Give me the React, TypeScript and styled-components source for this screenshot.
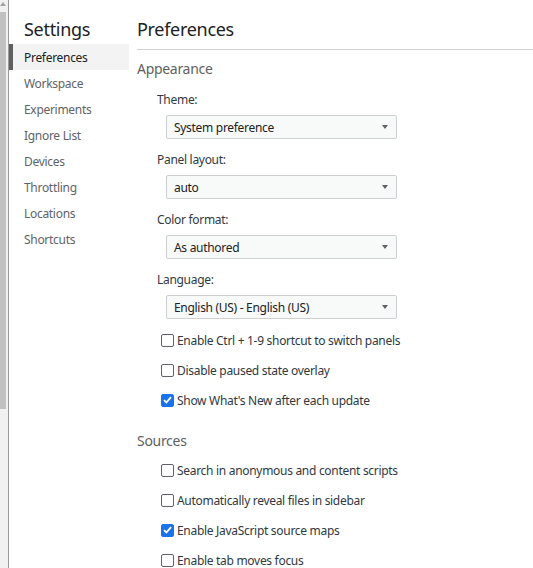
import styled, { createGlobalStyle } from 'styled-components';

const GlobalStyle = createGlobalStyle`
  html, body {
    margin: 0;
    padding: 0;
    background: #ffffff;
  }
  body {
    font-family: "Segoe UI", "Noto Sans", "Open Sans", sans-serif;
    font-size: 12px;
    letter-spacing: -0.025em;
    color: #303942;
    overflow: hidden;
  }
`;

const StyledFrame = styled.div`
  display: flex;
  height: 568px;
  width: 533px;
  overflow: hidden;
`;

const StyledRail = styled.div`
  background-color: #f1f1f1;
  display: flex;
  flex-direction: column;
  flex: 0 0 8px;
`;

const StyledRailArrow = styled.div`
  border-bottom: 4px solid #a3a3a3;
  border-left: 3px solid transparent;
  border-right: 3px solid transparent;
  height: 0;
  margin: 2px 0 0 0;
  width: 0;
`;

const StyledRailThumb = styled.div`
  background-color: #c1c1c1;
  height: 397px;
  margin-top: 6px;
  width: 6px;
`;

const StyledSidebar = styled.nav`
  border-left: 1px solid #9a9a9a;
  display: flex;
  flex: 0 0 120px;
  flex-direction: column;
`;

const StyledSidebarTitle = styled.h1`
  color: #202124;
  font-size: 18px;
  font-weight: 400;
  line-height: 24px;
  margin: 17px 0 3px 15px;
`;

const StyledNavItem = styled.div<{ $selected?: boolean }>`
  background-color: ${(p) => (p.$selected ? '#f3f3f3' : 'transparent')};
  border-left: 4px solid ${(p) => (p.$selected ? '#606060' : 'transparent')};
  color: ${(p) => (p.$selected ? '#202124' : '#5f6368')};
  height: 26px;
  line-height: 27px;
  padding-left: 11px;
`;

const StyledMain = styled.main`
  display: flex;
  flex: 1;
  flex-direction: column;
  min-width: 0;
  padding-left: 8px;
`;

const StyledHeader = styled.h2`
  border-bottom: 1px solid #d1d3d6;
  color: #202124;
  font-size: 18px;
  font-weight: 400;
  line-height: 24px;
  margin: 0;
  padding: 17px 0 8px;
`;

const StyledSection = styled.section<{ $spaced?: boolean }>`
  display: flex;
  flex-direction: column;
  margin-top: ${(p) => (p.$spaced ? '7px' : '0')};
`;

const StyledSectionTitle = styled.h3<{ $compact?: boolean }>`
  color: #5f5f5f;
  font-size: 14px;
  font-weight: 400;
  line-height: 20px;
  margin: 9px 0 ${(p) => (p.$compact ? '4px' : '6px')};
`;

const StyledField = styled.div`
  display: flex;
  flex-direction: column;
  padding-left: 20px;
`;

const StyledLabel = styled.label`
  color: #303942;
  line-height: 16px;
  margin: 7px 0;
`;

const StyledSelect = styled.div`
  align-items: center;
  background-color: #f8f9f9;
  border: 1px solid #cdcfd2;
  border-radius: 2px;
  box-sizing: border-box;
  color: #202124;
  display: flex;
  height: 24px;
  justify-content: space-between;
  margin: 0 0 6px 9px;
  padding: 0 8px 0 7px;
  width: 231px;
`;

const StyledCaret = styled.span`
  border-left: 3.5px solid transparent;
  border-right: 3.5px solid transparent;
  border-top: 4px solid #5f6368;
  height: 0;
  width: 0;
`;

const StyledCheckRow = styled.label`
  align-items: center;
  color: #303942;
  display: flex;
  gap: 3px;
  height: 30px;
  padding-left: 24px;
  white-space: nowrap;
`;

const StyledBox = styled.span<{ $checked?: boolean }>`
  align-items: center;
  background-color: ${(p) => (p.$checked ? '#1a73e8' : '#ffffff')};
  border: 1px solid ${(p) => (p.$checked ? '#1a73e8' : '#5f6368')};
  border-radius: 2px;
  box-sizing: border-box;
  display: flex;
  flex: 0 0 13px;
  height: 13px;
  justify-content: center;
`;

const NAV = [
  'Preferences',
  'Workspace',
  'Experiments',
  'Ignore List',
  'Devices',
  'Throttling',
  'Locations',
  'Shortcuts',
];

const SELECTS = [
  { label: 'Theme:', value: 'System preference' },
  { label: 'Panel layout:', value: 'auto' },
  { label: 'Color format:', value: 'As authored' },
  { label: 'Language:', value: 'English (US) - English (US)' },
];

const Check = ({ text, checked }: { text: string; checked?: boolean }) => (
  <StyledCheckRow>
    <StyledBox $checked={checked}>
      {checked && (
        <svg width="9" height="8" viewBox="0 0 9 8">
          <path d="M1 4.2 L3.4 6.5 L8 1.2" fill="none" stroke="#fff" strokeWidth="1.8" />
        </svg>
      )}
    </StyledBox>
    {text}
  </StyledCheckRow>
);

const App = () => {
  return (
    <>
      <GlobalStyle />
      <StyledFrame>
        <StyledRail>
          <StyledRailArrow />
          <StyledRailThumb />
        </StyledRail>
        <StyledSidebar>
          <StyledSidebarTitle>Settings</StyledSidebarTitle>
          {NAV.map((item, i) => (
            <StyledNavItem key={item} $selected={i === 0}>
              {item}
            </StyledNavItem>
          ))}
        </StyledSidebar>
        <StyledMain>
          <StyledHeader>Preferences</StyledHeader>
          <StyledSection>
            <StyledSectionTitle>Appearance</StyledSectionTitle>
            {SELECTS.map((s) => (
              <StyledField key={s.label}>
                <StyledLabel>{s.label}</StyledLabel>
                <StyledSelect>
                  {s.value}
                  <StyledCaret />
                </StyledSelect>
              </StyledField>
            ))}
            <Check text="Enable Ctrl + 1-9 shortcut to switch panels" />
            <Check text="Disable paused state overlay" />
            <Check text="Show What's New after each update" checked />
          </StyledSection>
          <StyledSection $spaced>
            <StyledSectionTitle $compact>Sources</StyledSectionTitle>
            <Check text="Search in anonymous and content scripts" />
            <Check text="Automatically reveal files in sidebar" />
            <Check text="Enable JavaScript source maps" checked />
            <Check text="Enable tab moves focus" />
          </StyledSection>
        </StyledMain>
      </StyledFrame>
    </>
  );
};

export default App;
